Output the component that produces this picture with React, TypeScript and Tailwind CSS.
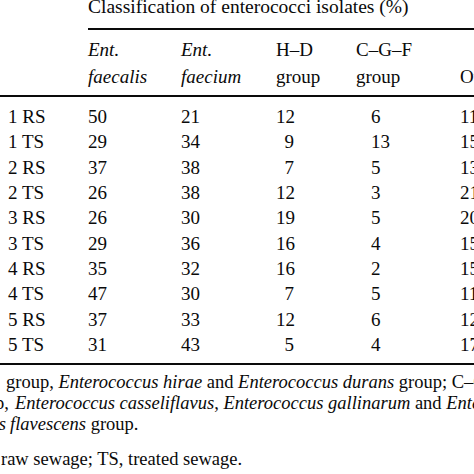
const rows = [
  ["1 RS", "50", "21", "12", "6", "11"],
  ["1 TS", "29", "34", "9", "13", "15"],
  ["2 RS", "37", "38", "7", "5", "13"],
  ["2 TS", "26", "38", "12", "3", "21"],
  ["3 RS", "26", "30", "19", "5", "20"],
  ["3 TS", "29", "36", "16", "4", "15"],
  ["4 RS", "35", "32", "16", "2", "15"],
  ["4 TS", "47", "30", "7", "5", "11"],
  ["5 RS", "37", "33", "12", "6", "12"],
  ["5 TS", "31", "43", "5", "4", "17"],
];

export default function App() {
  return (
    <div className="w-[474px] h-[474px] overflow-hidden bg-white text-[#0a0a0a] font-['Liberation_Serif','Times_New_Roman',serif]">
      {/* the table is wider than the window, the left and right edges are cut */}
      <div className="-ml-[40px] w-[600px]">
        <div className="pl-[128px] text-[19.5px] leading-[13px] whitespace-nowrap">
          Classification of enterococci isolates (%)
        </div>
        <div className="ml-[128px] mt-[15px] h-[1.5px] bg-[#0a0a0a]" />

        <div className="grid grid-cols-[128px_93px_95px_80px_104px_1fr] mt-[6px] text-[19px] leading-[27px] whitespace-nowrap">
          <div />
          <div className="italic">
            Ent.
            <br />
            faecalis
          </div>
          <div className="italic">
            Ent.
            <br />
            faecium
          </div>
          <div>
            H–D
            <br />
            group
          </div>
          <div>
            C–G–F
            <br />
            group
          </div>
          <div>
            <br />
            Others
          </div>
        </div>
        <div className="mt-[5.5px] h-[1.5px] bg-[#0a0a0a]" />

        <div className="mt-[7.5px] text-[19px] leading-[25.33px]">
          {rows.map((r) => (
            <div key={r[0]} className="grid grid-cols-[128px_93px_95px_80px_104px_1fr] whitespace-nowrap">
              <div className="flex">
                <span className="w-[40px] text-right">Site</span>
                <span className="ml-[8px]">{r[0]}</span>
              </div>
              <div>{r[1]}</div>
              <div>{r[2]}</div>
              <div className="w-[18px] text-right">{r[3]}</div>
              <div className="pl-[15px]">{r[4]}</div>
              <div>{r[5]}</div>
            </div>
          ))}
        </div>
        <div className="mt-[5.5px] h-[2px] bg-[#0a0a0a]" />
      </div>

      <div className="-ml-[140px] mt-[7px] text-[18.5px] leading-[21px] whitespace-nowrap">
        <div className="flex">
          <span className="w-[140px] shrink-0 text-right">H–D</span>
          <span className="ml-[6px]">
            group, <i>Enterococcus hirae</i> and <i>Enterococcus durans</i> group; C–G–F
          </span>
        </div>
        <div className="flex">
          <span className="w-[149px] shrink-0 text-right">group,</span>
          <span className="ml-[6px]">
            <i>Enterococcus casseliflavus</i>, <i>Enterococcus gallinarum</i> and <i>Enterococcus</i>
          </span>
        </div>
        <div className="flex">
          <span className="w-[146px] shrink-0 text-right italic">Enterococcus</span>
          <span className="ml-[4px]">
            <i>flavescens</i> group.
          </span>
        </div>
        <div className="flex mt-[14px]">
          <span className="w-[136px] shrink-0 text-right">RS,</span>
          <span className="ml-[5px]">raw sewage; TS, treated sewage.</span>
        </div>
      </div>
    </div>
  );
}
